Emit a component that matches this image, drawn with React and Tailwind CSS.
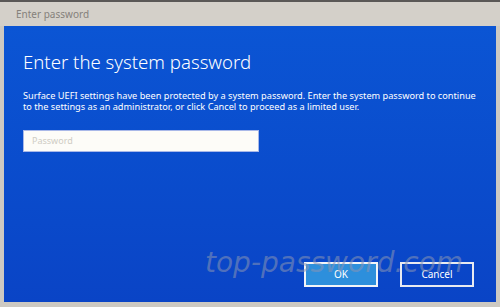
import React from "react";

export default function App() {
  return (
    <div className="relative w-[500px] h-[307px] bg-[#cdc9c2] flex flex-col overflow-hidden">
      <div className="h-[2px] bg-[#5a5856]" />
      <div className="h-[24px] flex items-center pl-[16px] text-[10px] text-[#85817b] font-['Noto_Sans',sans-serif] bg-[#d4d0c9]">
        Enter password
      </div>
      <div className="flex-1 ml-[4px] mr-[4px] mb-[5px] bg-gradient-to-b from-[#0b55d4] to-[#0a44c6] px-[19px] pt-[25px] flex flex-col font-['Noto_Sans',sans-serif] text-white">
        <div className="text-[18.6px] leading-[22px] font-light">Enter the system password</div>
        <div className="mt-[17px] text-[9.2px] leading-[11px] whitespace-nowrap">
          Surface UEFI settings have been protected by a system password. Enter the system password to continue
        </div>
        <div className="text-[9.2px] leading-[11px] whitespace-nowrap">
          to the settings as an administrator, or click Cancel to proceed as a limited user.
        </div>
        <div className="mt-[18px] w-[236px] h-[22px] bg-[#fdfcf8] border border-[#a9b8e8] flex items-center pl-[8px] text-[9px] text-[#cfccc4]">
          Password
        </div>
        <div className="flex-1" />
        <div className="flex justify-end gap-[22px] pr-[3px] mb-[15px]">
          <div className="w-[74px] h-[25px] bg-[#2d8fdc] border-2 border-[#f2f4f8] flex items-center justify-center text-[10px]">OK</div>
          <div className="w-[74px] h-[25px] border-2 border-[#e8eaf0] flex items-center justify-center text-[10px]">Cancel</div>
        </div>
      </div>
      <div className="absolute left-[205px] top-[242px] text-[28px] italic text-[#8894b4] opacity-55 font-['DejaVu_Sans',sans-serif] pointer-events-none">
        top-password.com
      </div>
    </div>
  );
}
